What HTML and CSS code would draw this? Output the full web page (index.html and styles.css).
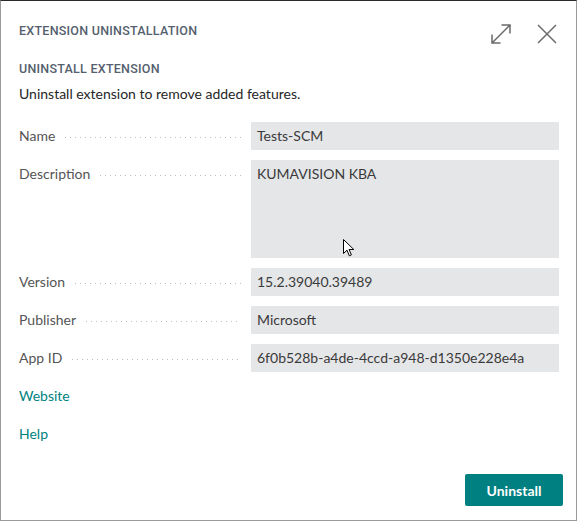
FILE: index.html
```html
<!DOCTYPE html>
<html>
<head>
<meta charset="utf-8">
<link rel="stylesheet" href="styles.css">
</head>
<body>
<div class="dialog">
  <div class="header">
    <div class="title">EXTENSION UNINSTALLATION</div>
    <div class="actions">
      <svg class="icon" width="22" height="22" viewBox="0 0 22 22">
        <path d="M2 20 L20 2 M11.5 2 H20 V10.5 M2 11.5 V20 H10.5" fill="none" stroke="#6b6b6b" stroke-width="1.5"/>
      </svg>
      <svg class="icon" width="22" height="22" viewBox="0 0 22 22">
        <path d="M2 2 L20 20 M20 2 L2 20" fill="none" stroke="#6b6b6b" stroke-width="1.5"/>
      </svg>
    </div>
  </div>
  <div class="section">UNINSTALL EXTENSION</div>
  <div class="intro">Uninstall extension to remove added features.</div>
  <div class="fields">
    <div class="label"><span>Name</span><span class="leader"></span></div>
    <div class="value">Tests-SCM</div>
    <div class="label"><span>Description</span><span class="leader"></span></div>
    <div class="value tall">KUMAVISION KBA
      <svg class="cursor" width="12" height="18" viewBox="0 0 12 18">
        <path d="M0.5 0.5 V14.5 L4 11.2 L6.3 16.8 L8.4 15.9 L6.1 10.5 H10.8 Z" fill="#fff" stroke="#000" stroke-width="1"/>
      </svg>
    </div>
    <div class="label"><span>Version</span><span class="leader"></span></div>
    <div class="value">15.2.39040.39489</div>
    <div class="label"><span>Publisher</span><span class="leader"></span></div>
    <div class="value">Microsoft</div>
    <div class="label"><span>App ID</span><span class="leader"></span></div>
    <div class="value">6f0b528b-a4de-4ccd-a948-d1350e228e4a</div>
  </div>
  <div class="links">
    <a class="link">Website</a>
    <a class="link">Help</a>
  </div>
  <div class="footer">
    <button class="primary">Uninstall</button>
  </div>
</div>
</body>
</html>
```

FILE: styles.css
```css
html, body {
  margin: 0;
  padding: 0;
  background: #fff;
}
.dialog {
  box-sizing: border-box;
  width: 577px;
  height: 521px;
  border-top: 1px solid #2b2b2b;
  border-left: 1px solid #9a9a9a;
  border-right: 1px solid #9a9a9a;
  border-bottom: 1px solid #9a9a9a;
  padding: 0 17px 0 18px;
  font-family: "Segoe UI", Lato, "Noto Sans", sans-serif;
  font-size: 14px;
  color: #212121;
  display: flex;
  flex-direction: column;
}
.header {
  display: flex;
  justify-content: space-between;
  align-items: center;
  height: 61px;
}
.title, .section {
  font-family: Roboto, "Noto Sans", sans-serif;
  font-weight: 500;
  font-size: 12.5px;
  color: #555f6e;
  letter-spacing: 0.25px;
}
.title {
  margin-top: -2px;
}
.actions {
  display: flex;
  gap: 24px;
  margin-right: 1px;
  margin-top: 4px;
}
.icon {
  display: block;
}
.section {
  line-height: 14px;
}
.intro {
  margin-top: 9px;
  line-height: 18px;
  color: #262626;
}
.fields {
  margin-top: 19px;
  display: grid;
  grid-template-columns: 232px 1fr;
  row-gap: 10px;
}
.label {
  display: flex;
  align-items: flex-start;
  color: #555;
  line-height: 18px;
  padding-top: 5px;
}
.leader {
  flex: 1;
  height: 1px;
  margin: 10px 10px 0 10px;
  background-image: linear-gradient(to right, #bdbdbd 1px, transparent 1px);
  background-size: 5px 1px;
  background-repeat: repeat-x;
}
.value {
  background: #e5e6e8;
  height: 28px;
  box-sizing: border-box;
  padding: 5px 6px;
  line-height: 18px;
  color: #3a3a3a;
  position: relative;
}
.value.tall {
  height: 98px;
}
.cursor {
  position: absolute;
  left: 92px;
  top: 79px;
}
.links {
  display: flex;
  flex-direction: column;
  gap: 20px;
  margin-top: 15px;
}
.link {
  color: #00827f;
  line-height: 18px;
}
.footer {
  margin-top: auto;
  display: flex;
  justify-content: flex-end;
  padding-bottom: 14px;
  margin-right: -4px;
}
.primary {
  width: 98px;
  height: 32px;
  background: #008080;
  color: #fff;
  border: none;
  border-radius: 2px;
  font-family: "Segoe UI", Lato, "Noto Sans", sans-serif;
  font-weight: 700;
  font-size: 14px;
}
```
